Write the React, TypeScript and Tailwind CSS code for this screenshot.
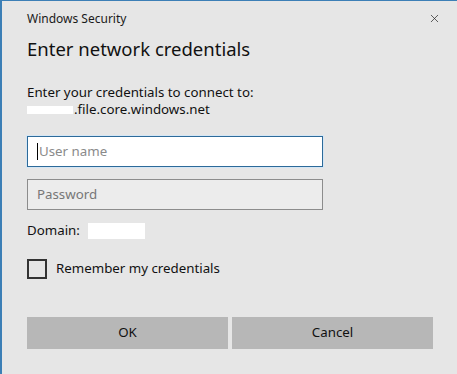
import { X } from "lucide-react";

const App = () => {
  return (
    <div className="w-[457px] h-[374px] bg-[#e6e6e6] border-l-2 border-t border-[#3c7fb6] font-['Segoe_UI','Noto_Sans',sans-serif] text-[#000] overflow-hidden">
      <div className="flex items-center justify-between pl-[25px] pr-[16px] pt-[3px] h-[32px]">
        <span className="text-[12px] leading-none text-[#1a1a1a]">Windows Security</span>
        <X className="w-[13px] h-[13px] text-[#222]" strokeWidth={1.3} />
      </div>

      <div className="pl-[25px] pr-[24px]">
        <h1 className="text-[18.5px] leading-[26px] mt-[3px] text-[#111]">Enter network credentials</h1>

        <div className="mt-[22px] text-[13.3px] leading-[17px] text-[#111]">
          <p>Enter your credentials to connect to:</p>
          <p className="flex items-center">
            <span className="inline-block w-[46px] h-[8px] bg-white mr-[1px]" />
            .file.core.windows.net
          </p>
        </div>

        <div className="mt-[18px] w-[296px] h-[31px] bg-white border border-[#2d6a99] shadow-[0_0_0_1px_#d4e6f5] flex items-center px-[9px]">
          <span className="w-px h-[17px] bg-black mr-[1px]" />
          <span className="text-[13.3px] text-[#8a8a8a]">User name</span>
        </div>

        <div className="mt-[12px] w-[296px] h-[31px] bg-[#ececec] border border-[#8c8c8c] flex items-center px-[9px]">
          <span className="text-[13.3px] text-[#777]">Password</span>
        </div>

        <div className="mt-[12px] flex items-center text-[13.3px] h-[18px]">
          <span className="text-[#111]">Domain:</span>
          <span className="ml-[8px] inline-block w-[57px] h-[16px] bg-white" />
        </div>

        <div className="mt-[19px] flex items-center">
          <span className="w-[20px] h-[20px] border-2 border-[#333] bg-transparent" />
          <span className="ml-[9px] text-[13.3px] text-[#111]">Remember my credentials</span>
        </div>

        <div className="mt-[38px] flex gap-[4px]">
          <button className="w-[201px] h-[32px] bg-[#b7b7b7] text-[13.3px] text-[#111]">OK</button>
          <button className="w-[201px] h-[32px] bg-[#b7b7b7] text-[13.3px] text-[#111]">Cancel</button>
        </div>
      </div>
    </div>
  );
};

export default App;
